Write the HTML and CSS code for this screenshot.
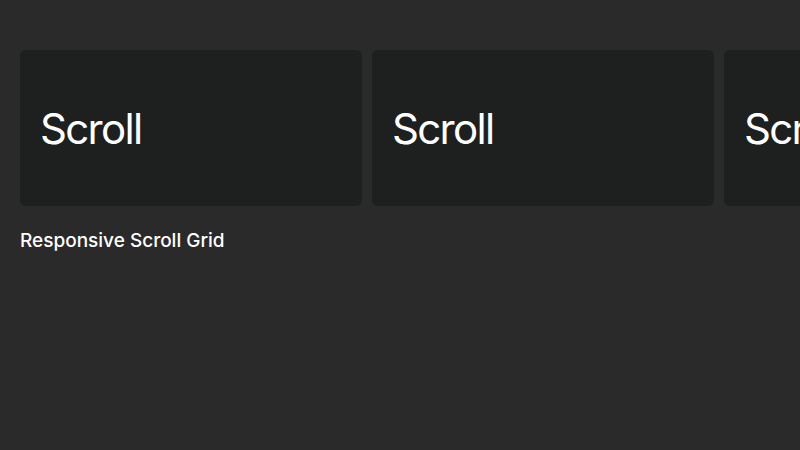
FILE: index.html
```html
<!DOCTYPE html>
<html>
<head>
<meta charset="utf-8">
<link rel="stylesheet" href="styles.css">
</head>
<body>
<main class="page">
  <div class="scroller">
    <div class="card"><span>Scroll</span></div>
    <div class="card"><span>Scroll</span></div>
    <div class="card"><span>Scroll</span></div>
    <div class="card"><span>Scroll</span></div>
  </div>
  <p class="caption">Responsive Scroll Grid</p>
</main>
</body>
</html>
```
FILE: styles.css
```css
html, body {
  margin: 0;
  padding: 0;
  background: #2a2a2a;
  width: 800px;
  height: 450px;
  overflow: hidden;
}
.page {
  padding: 50px 0 0 20px;
  font-family: Inter, "Noto Sans", sans-serif;
  color: #ffffff;
}
.scroller {
  display: grid;
  grid-auto-flow: column;
  grid-auto-columns: 342px;
  gap: 10px;
  overflow: hidden;
}
.card {
  height: 156px;
  background: #1e1f1f;
  border-radius: 6px;
  display: flex;
  align-items: center;
  padding: 0 20px;
  font-size: 42px;
  letter-spacing: -1.7px;
}
.caption {
  margin: 24px 0 0;
  font-size: 19px;
  font-weight: 500;
  letter-spacing: 0;
  line-height: 22px;
}
```
